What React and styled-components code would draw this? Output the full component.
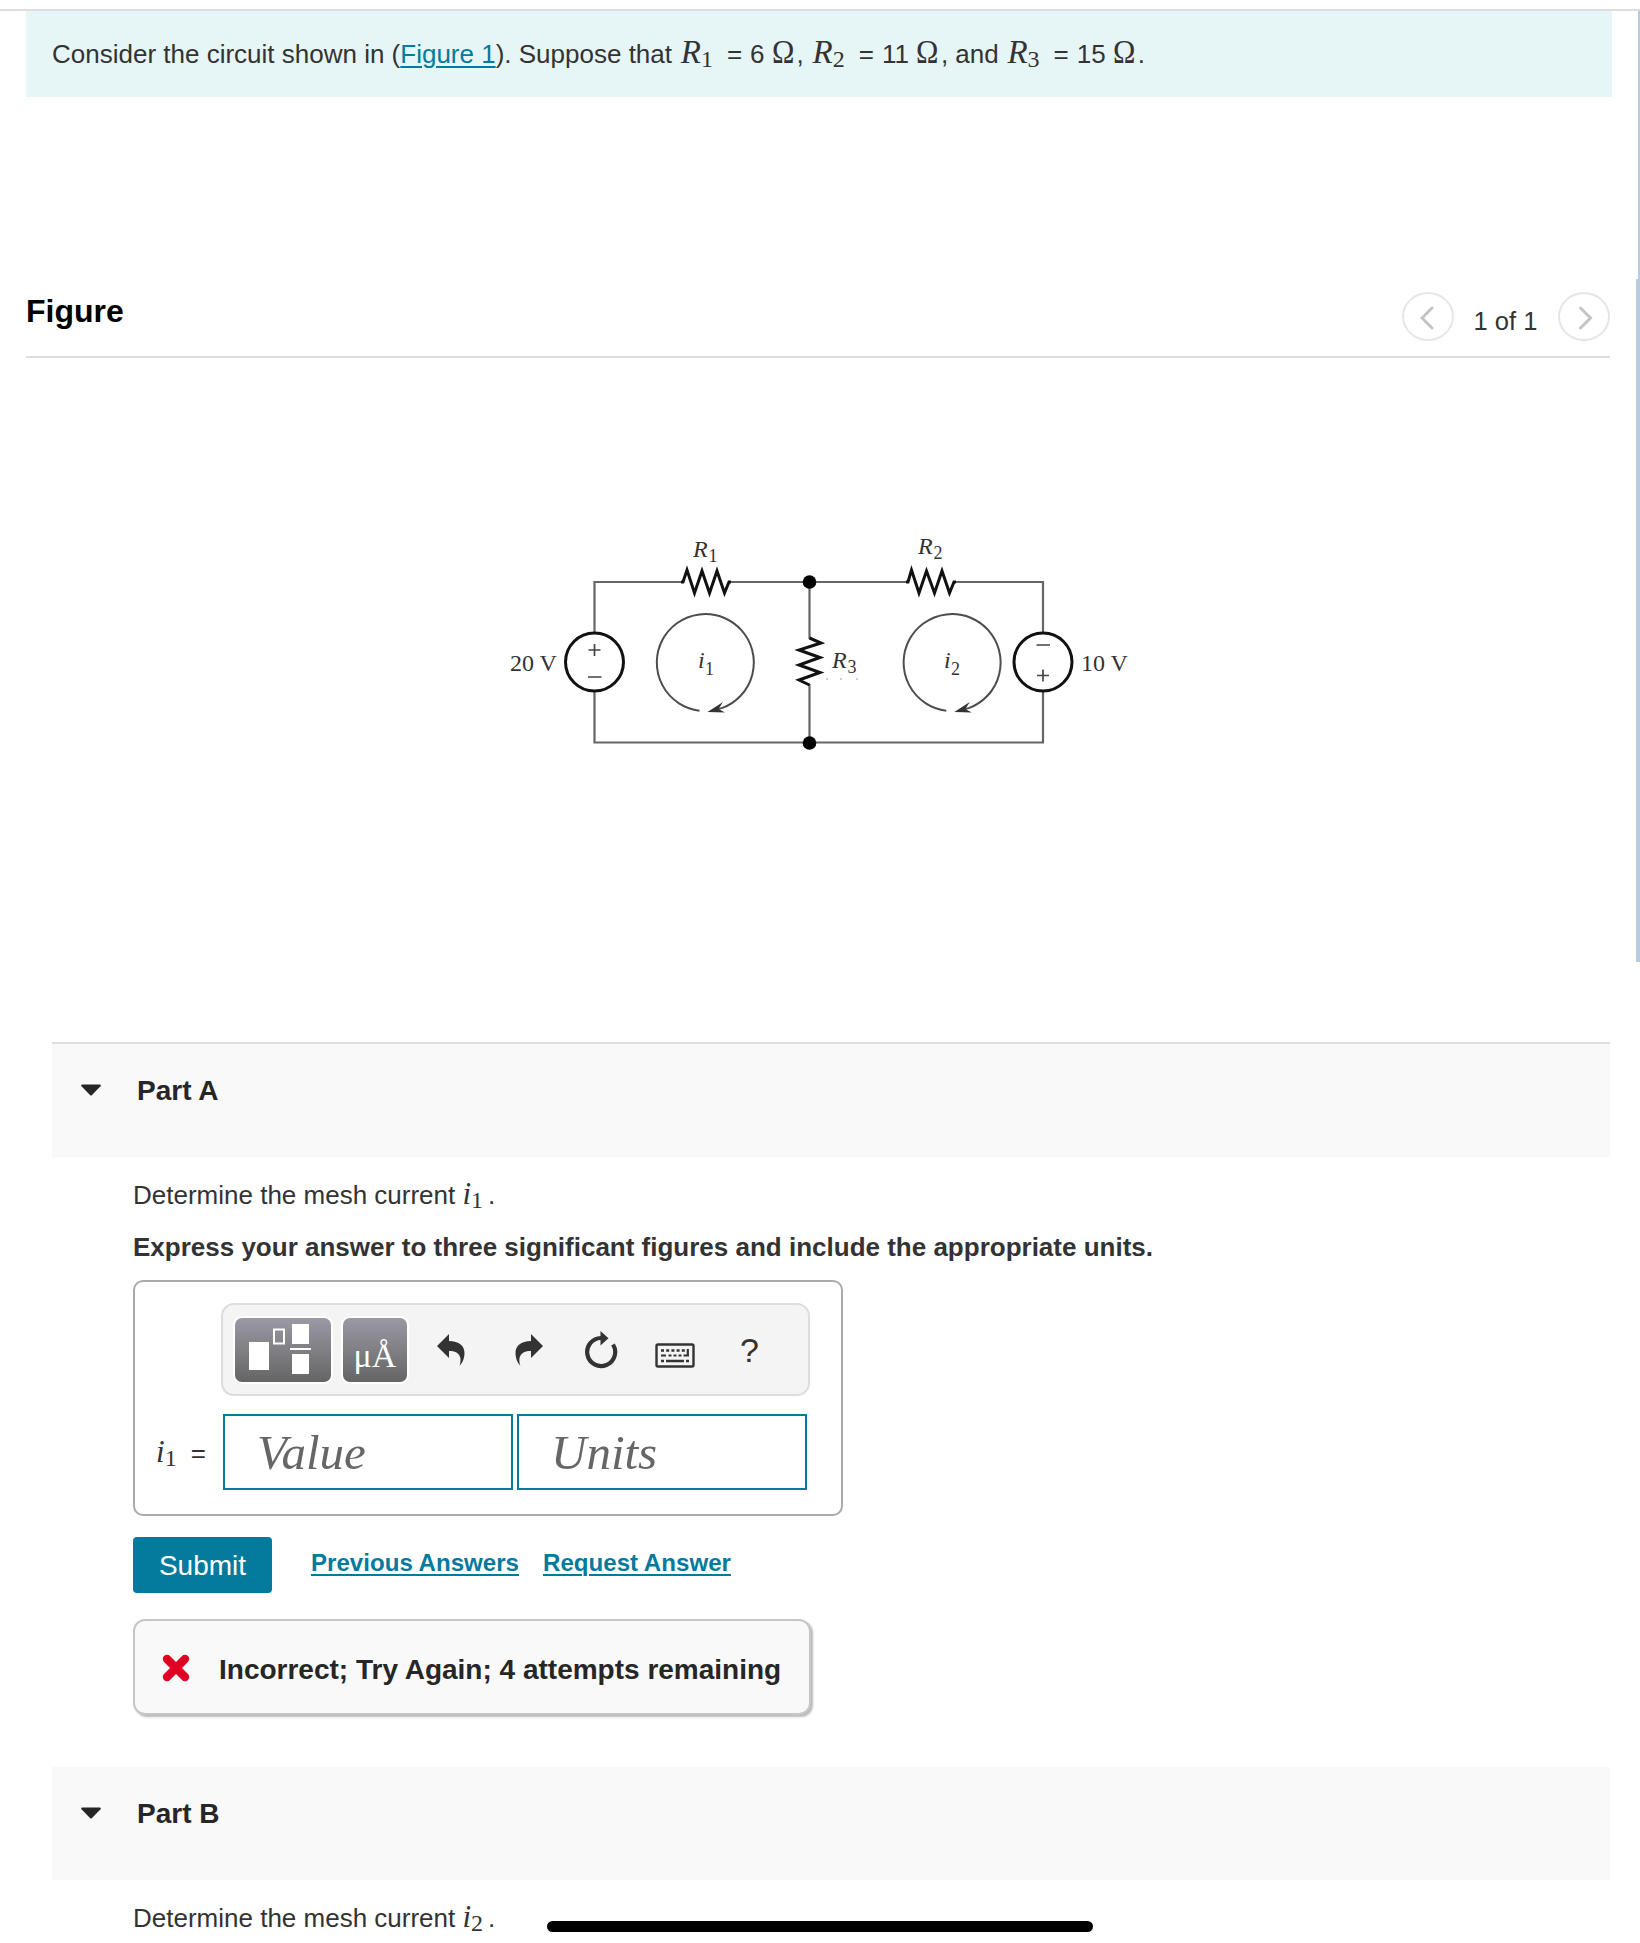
import React from "react";
import styled, { createGlobalStyle } from "styled-components";

const GlobalStyle = createGlobalStyle`
  * {
    box-sizing: border-box;
  }

  body {
    margin: 0;
    background: #fff;
    color: #333;
    font-family: "Liberation Sans", Arial, sans-serif;
    font-size: 26px;
  }
`;

const Variable = ({ name, index }) => (
  <Math>
    <Letter $short={name === "i"}>{name}</Letter>
    <Sub>{index}</Sub>
  </Math>
);

const Resistance = ({ index, value, end }) => (
  <>
    <Variable name="R" index={index} />
    <Equals>=</Equals>
    <Amount>{value}</Amount>
    <Omega>Ω</Omega>
    {end}
  </>
);

const Label = ({ x, y, name, index, dx = 15.5, dy = 5 }) => (
  <>
    <CircuitText x={x} y={y} $italic>
      {name}
    </CircuitText>
    <CircuitText x={x + dx} y={y + dy} $small>
      {index}
    </CircuitText>
  </>
);

const MeshLoop = ({ cx }) => (
  <g transform={`translate(${cx} 662.5)`}>
    <path
      d="M-6 48.2A48.5 48.5 0 1 1 17 45.4L11 47"
      fill="none"
      stroke="#4d4d4d"
      strokeWidth="2"
    />
    <path d="M2 49.5L17.5 39.5L13 46.5L19.5 50Z" fill="#333" />
  </g>
);

const Circuit = () => (
  <CircuitSvg viewBox="490 520 660 250">
    <g fill="none" stroke="#666" strokeWidth="2.2">
      <path d="M594.5 633V582H682M729.5 582H907M955 582H1043V633" />
      <path d="M594.5 691V742.5H1043V691" />
      <path d="M809.5 582V639M809.5 684V742" />
    </g>
    <g fill="none" stroke="#111" strokeWidth="3" strokeLinejoin="miter">
      <path d="M681 582H683L687 570L694.5 593L702 571L709.5 593L717 571L724.5 593L729 582H731" />
      <path d="M906 582H908L911.5 570L919 593L926.5 571L934.5 593L942 571L949.5 593L954 582H956" />
      <path d="M809.5 638L821 643L799 650L820 657.5L799 665L820 672.5L799 680L809.5 685" />
      <circle cx="594.5" cy="662" r="29" strokeWidth="3" />
      <circle cx="1043" cy="662" r="29" strokeWidth="3" />
    </g>
    <circle cx="809.5" cy="582" r="6.8" fill="#000" />
    <circle cx="809.5" cy="743" r="6.8" fill="#000" />
    <g stroke="#444" strokeWidth="1.7">
      <path d="M588.5 650H600.5M594.5 644V656M588 677H601.5" />
      <path d="M1036.5 645H1050M1037 675.5H1049M1043 669.5V681.5" />
    </g>
    <MeshLoop cx={705.5} />
    <MeshLoop cx={952.3} />
    <g fill="#bbb">
      <circle cx="827" cy="679" r="1" />
      <circle cx="841" cy="679" r="1" />
      <circle cx="857" cy="679" r="1" />
    </g>
    <Label x={693} y={556.5} name="R" index="1" />
    <Label x={918} y={554} name="R" index="2" />
    <Label x={832} y={668} name="R" index="3" />
    <Label x={698} y={668} name="i" index="1" dx={7} dy={6.5} />
    <Label x={944} y={668} name="i" index="2" dx={7} dy={6.5} />
    <CircuitText x={510} y={671}>
      20 V
    </CircuitText>
    <CircuitText x={1081} y={671}>
      10 V
    </CircuitText>
  </CircuitSvg>
);

const Caret = () => (
  <svg width="22" height="12" viewBox="0 0 22 12">
    <path d="M2 0.5H20Q21.5 1 20.5 2.2L12 11Q11 12 10 11L1.5 2.2Q0.5 1 2 0.5Z" fill="#262626" />
  </svg>
);

const TemplateIcon = () => (
  <svg width="96" height="64" viewBox="0 0 96 64" fill="#fff">
    <rect x="14" y="24" width="20" height="28" />
    <rect x="39" y="11.5" width="10" height="14" fill="none" stroke="#fff" strokeWidth="2" />
    <rect x="57" y="6" width="17" height="20" />
    <rect x="55" y="30" width="21" height="2" />
    <rect x="57" y="36" width="17" height="20" />
  </svg>
);

const ArrowIcon = ({ flip }) => (
  <svg width="28" height="32" viewBox="0 0 28 32">
    <path
      d="M0 12L12 0V7C22 7 28 12 27.5 20C27 26 25 29 22.5 32C25 25 24 17 12 17V24Z"
      transform={flip ? "translate(28 0) scale(-1 1)" : undefined}
      fill="#333"
    />
  </svg>
);

const ResetIcon = () => (
  <svg width="34" height="38" viewBox="0 0 34 38">
    <path d="M17 7A14 14 0 1 0 29 13.5" fill="none" stroke="#333" strokeWidth="4.2" />
    <path d="M16.5 0L24.5 7.3L16.5 14.5Z" fill="#333" />
  </svg>
);

const KeyboardIcon = () => (
  <svg width="40" height="26" viewBox="0 0 40 26" fill="none" stroke="#333">
    <rect x="1.5" y="1.5" width="37" height="22" rx="1.5" strokeWidth="2.4" />
    <path d="M6 7.5H31" strokeWidth="2.4" strokeDasharray="3 2.2" />
    <path d="M6 12.5H11M13.5 12.5H16.5M18.5 12.5H21.5M23.5 12.5H26.5M28.5 12.5H34M32.8 13V6" strokeWidth="2.2" />
    <path d="M6 18H9M11 18H29M31 18H34" strokeWidth="2.4" />
  </svg>
);

const CrossIcon = () => (
  <svg width="28" height="28" viewBox="0 0 28 28">
    <path d="M5 5L23 23M23 5L5 23" stroke="#df0024" strokeWidth="8.4" strokeLinecap="round" />
  </svg>
);

const Chevron = ({ next }) => (
  <svg width="17" height="24" viewBox="0 0 17 24">
    <path
      d={next ? "M4.5 2L14.5 12L4.5 22" : "M12 2L2 12L12 22"}
      fill="none"
      stroke="#c4c4c4"
      strokeWidth="3"
      strokeLinecap="round"
    />
  </svg>
);

const App = () => {
  return (
    <>
      <GlobalStyle />
      <Page>
        <Main>
          <Problem>
            Consider the circuit shown in (<Link href="#figure">Figure 1</Link>). Suppose that{" "}
            <Resistance index="1" value="6" end=", " />
            <Resistance index="2" value="11" end=", and " />
            <Resistance index="3" value="15" end="." />
          </Problem>

          <FigureHeader id="figure">
            <FigureTitle>Figure</FigureTitle>
            <Pager>
              <Round>
                <Chevron />
              </Round>
              <Count>1 of 1</Count>
              <Round>
                <Chevron next />
              </Round>
            </Pager>
          </FigureHeader>
          <Viewer>
            <Circuit />
          </Viewer>

          <PartHeader $line>
            <Caret />
            <PartTitle>Part A</PartTitle>
          </PartHeader>
          <PartBody>
            <Question>
              Determine the mesh current <Variable name="i" index="1" />
              <Stop>.</Stop>
            </Question>
            <Hint>
              Express your answer to three significant figures and include the appropriate units.
            </Hint>
            <AnswerBox>
              <Toolbar>
                <Tool $width={96}>
                  <TemplateIcon />
                </Tool>
                <Tool $width={64}>
                  <Micro>μÅ</Micro>
                </Tool>
                <Icons>
                  <ArrowIcon />
                  <ArrowIcon flip />
                  <ResetIcon />
                  <KeyboardIcon />
                  <Help>?</Help>
                </Icons>
              </Toolbar>
              <Fields>
                <FieldName>
                  <Variable name="i" index="1" />
                  <Equals>=</Equals>
                </FieldName>
                <Field>Value</Field>
                <Field>Units</Field>
              </Fields>
            </AnswerBox>
            <Actions>
              <Submit>Submit</Submit>
              <Action href="#previous">Previous Answers</Action>
              <Action href="#request">Request Answer</Action>
            </Actions>
            <Feedback>
              <CrossIcon />
              <Message>Incorrect; Try Again; 4 attempts remaining</Message>
            </Feedback>
          </PartBody>

          <PartHeader>
            <Caret />
            <PartTitle>Part B</PartTitle>
          </PartHeader>
          <PartBody>
            <Question>
              Determine the mesh current <Variable name="i" index="2" />
              <Stop>.</Stop>
            </Question>
          </PartBody>
        </Main>
        <Rail>
          <Track />
          <Thumb />
        </Rail>
        <HomeIndicator />
      </Page>
    </>
  );
};

const Page = styled.div`
  position: relative;
  display: flex;
  width: 1640px;
  height: 1943px;
  padding-top: 9px;
  overflow: hidden;
`;

const Main = styled.main`
  width: 1636px;
  border-top: 2px solid #dedede;
`;

const Rail = styled.div`
  display: flex;
  flex-direction: column;
  align-items: flex-end;
  width: 4px;
  border-top: 2px solid #dedede;
`;

const Track = styled.div`
  width: 2px;
  height: 268px;
  background: #b9ccdd;
`;

const Thumb = styled.div`
  width: 4px;
  height: 683px;
  background: #b9ccdd;
`;

const HomeIndicator = styled.div`
  position: absolute;
  left: 547px;
  bottom: 11px;
  width: 546px;
  height: 11px;
  border-radius: 6px;
  background: #000;
`;

const Problem = styled.div`
  width: 1586px;
  height: 86px;
  margin-left: 26px;
  padding-left: 26px;
  background: #e6f5f6;
  line-height: 86px;
  white-space: nowrap;
`;

const Link = styled.a`
  color: #047a9c;
  text-decoration-thickness: 2px;
  text-underline-offset: 3px;
`;

const Math = styled.span`
  font-family: "Liberation Serif", "Times New Roman", serif;
  line-height: 0;
`;

const Letter = styled.i`
  margin-left: ${({ $short }) => ($short ? 0 : 1.5)}px;
  font-size: ${({ $short }) => ($short ? 31 : 33)}px;
`;

const Sub = styled.span`
  position: relative;
  top: 4px;
  font-size: 24px;
`;

const Equals = styled.span`
  margin-left: 14px;
`;

const Amount = styled.span`
  margin: 0 7px 0 8px;
`;

const Omega = styled.span`
  display: inline-block;
  width: 25px;
  font-family: "Liberation Serif", "Times New Roman", serif;
  font-size: 33.5px;
  line-height: 0;
  transform: scaleX(0.9);
  transform-origin: left;
`;

const FigureHeader = styled.div`
  display: flex;
  justify-content: space-between;
  width: 1584px;
  height: 79px;
  margin: 182px 0 0 26px;
  border-bottom: 2px solid #dedede;
`;

const FigureTitle = styled.h2`
  margin: 0;
  color: #000;
  font-size: 32px;
  line-height: 64px;
`;

const Pager = styled.div`
  display: flex;
  padding-top: 13px;
`;

const Round = styled.button`
  display: flex;
  align-items: center;
  justify-content: center;
  width: 52px;
  height: 49px;
  padding: 3px 0 0;
  border: 2px solid #e6e6e6;
  border-radius: 50%;
  background: #fff;
`;

const Count = styled.div`
  width: 104px;
  padding-right: 1px;
  font-size: 25.5px;
  line-height: 58px;
  text-align: center;
`;

const Viewer = styled.div`
  height: 684px;
  padding: 162px 0 0 490px;
`;

const CircuitSvg = styled.svg`
  display: block;
  width: 660px;
  height: 250px;
`;

const CircuitText = styled.text`
  fill: #333;
  font-family: "Liberation Serif", "Times New Roman", serif;
  font-size: ${({ $small }) => ($small ? 18 : 24)}px;
  font-style: ${({ $italic }) => ($italic ? "italic" : "normal")};
`;

const PartHeader = styled.div`
  display: flex;
  align-items: flex-start;
  gap: 35px;
  width: 1558px;
  height: ${({ $line }) => ($line ? 115 : 113)}px;
  margin-left: 52px;
  padding: 0 0 0 28px;
  border-top: ${({ $line }) => ($line ? "2px solid #dedede" : "none")};
  background: #f9f9f9;

  svg {
    margin-top: 40px;
  }
`;

const PartTitle = styled.h3`
  margin: 0;
  color: #262626;
  font-size: 28px;
  line-height: 93px;
`;

const PartBody = styled.div`
  padding-left: 133px;
`;

const Question = styled.p`
  height: 73px;
  margin: 0;
  line-height: 76px;
`;

const Stop = styled.span`
  margin-left: 5px;
`;

const Hint = styled.p`
  height: 50px;
  margin: 0;
  font-weight: bold;
  line-height: 34px;
`;

const AnswerBox = styled.div`
  width: 710px;
  height: 236px;
  padding: 21px 0 0;
  border: 2px solid #aaa;
  border-radius: 10px;
`;

const Toolbar = styled.div`
  display: flex;
  align-items: center;
  gap: 12px;
  width: 589px;
  height: 93px;
  margin-left: 86px;
  padding-left: 12px;
  border: 2px solid #ddd;
  border-radius: 13px;
  background: #f4f4f4;
`;

const Tool = styled.button`
  display: flex;
  align-items: center;
  justify-content: center;
  width: ${({ $width }) => $width}px;
  height: 64px;
  padding: 0;
  border: none;
  border-radius: 7px;
  background: linear-gradient(#9b99a4, #656565);
  box-shadow: 0 0 0 2px #fff;
  color: #fff;
`;

const Micro = styled.span`
  padding-top: 13px;
  font-family: "Liberation Serif", "Times New Roman", serif;
  font-size: 34px;
`;

const Icons = styled.div`
  display: flex;
  align-items: center;
  margin-left: 18px;

  svg:nth-child(2) {
    margin-left: 50px;
  }

  svg:nth-child(3) {
    margin: 1px 0 0 41px;
  }

  svg:nth-child(4) {
    margin: 12px 0 0 37px;
  }
`;

const Help = styled.span`
  margin-left: 45px;
  font-size: 34px;
  line-height: 40px;
`;

const Fields = styled.div`
  display: flex;
  gap: 4px;
  height: 76px;
  margin-top: 18px;
`;

const FieldName = styled.div`
  width: 84px;
  padding-left: 21px;
  line-height: 79px;
  white-space: nowrap;
`;

const Field = styled.div`
  width: 290px;
  padding-left: 32px;
  border: 2px solid #047a9c;
  color: #666;
  font-family: "Liberation Serif", "Times New Roman", serif;
  font-size: 49px;
  font-style: italic;
  line-height: 73px;
`;

const Actions = styled.div`
  display: flex;
  gap: 24px;
  margin-top: 21px;
`;

const Submit = styled.button`
  width: 139px;
  height: 56px;
  margin-right: 15px;
  padding: 2px 0 0;
  border: none;
  border-radius: 4px;
  background: #047a9c;
  color: #fff;
  font-family: inherit;
  font-size: 28px;
`;

const Action = styled.a`
  color: #047a9c;
  font-size: 24.1px;
  font-weight: bold;
  line-height: 52px;
  text-decoration-thickness: 2px;
  text-underline-offset: 3px;
`;

const Feedback = styled.div`
  display: flex;
  align-items: center;
  gap: 29px;
  width: 678px;
  height: 96px;
  margin: 26px 0 52px;
  padding: 2px 0 0 27px;
  border: 2px solid #c6c6c6;
  border-radius: 12px;
  background: #f9f9f9;
  box-shadow: 2px 2px 2px #bbb;
`;

const Message = styled.span`
  padding-top: 3px;
  color: #262626;
  font-size: 28px;
  font-weight: bold;
  white-space: nowrap;
`;

export default App;
